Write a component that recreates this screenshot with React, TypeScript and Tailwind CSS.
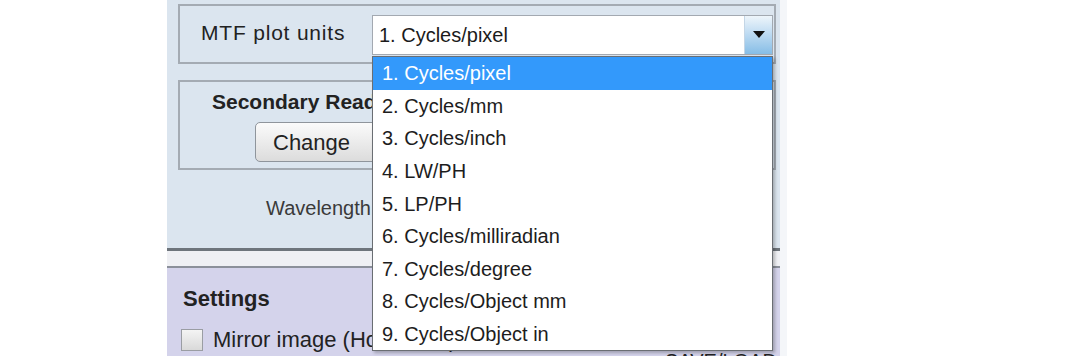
import React from "react";

const units = [
  "1. Cycles/pixel",
  "2. Cycles/mm",
  "3. Cycles/inch",
  "4. LW/PH",
  "5. LP/PH",
  "6. Cycles/milliradian",
  "7. Cycles/degree",
  "8. Cycles/Object mm",
  "9. Cycles/Object in",
];

function UnitSelect() {
  return (
    <div className="relative w-[401px] h-[40px] shrink-0">
      <div className="flex h-full border border-[#a3a9b1] bg-white">
        <div className="flex-1 flex items-center pl-[6px] text-[20px] text-[#1b1b1b]">
          {units[0]}
        </div>
        <div className="w-[28px] h-full flex items-center justify-center bg-gradient-to-b from-[#eef5fb] to-[#86bde6] border-l border-[#c4d6e6]">
          <svg width="12" height="8" viewBox="0 0 12 8">
            <path d="M0 0 L12 0 L6 7 Z" fill="#111" />
          </svg>
        </div>
      </div>

      {/* open list, drawn over the panel below */}
      <div className="absolute left-0 top-[41px] w-[401px] bg-white border border-[#6a6e73] shadow-[2px_2px_3px_rgba(0,0,0,0.25)] z-10">
        {units.map((u, i) => (
          <div
            key={u}
            className={`h-[32.6px] flex items-center pl-[9px] text-[20px] ${
              i === 0 ? "bg-[#3399fb] text-white" : "text-[#1d1d1d]"
            }`}
          >
            {u}
          </div>
        ))}
      </div>
    </div>
  );
}

export default function App() {
  return (
    <div
      className="w-[1068px] h-[356px] overflow-hidden bg-white flex"
      style={{ fontFamily: '"Liberation Sans", Arial, sans-serif' }}
    >
      <div className="w-[167px] shrink-0" />

      <div className="w-[613px] shrink-0 flex flex-col">
        <div className="h-[248px] shrink-0 bg-[#dbe5ef] pl-[11px] pt-[4px] flex flex-col">
          <div className="w-[598px] h-[60px] border-2 border-[#a4abb3] flex items-start pt-[9px] pl-[21px]">
            <div className="w-[171px] h-[36px] flex items-center text-[21px] tracking-[0.8px] text-[#222]">
              MTF plot units
            </div>
            <UnitSelect />
          </div>

          <div className="mt-[16px] w-[598px] h-[90px] border-2 border-[#a4abb3] pl-[32px] pt-[8px] flex flex-col">
            <div className="whitespace-nowrap text-[21px] leading-[24px] font-bold text-[#222]">
              Secondary Readout
            </div>
            <button className="ml-[43px] mt-[8px] w-[150px] h-[40px] rounded-[5px] border border-[#8f959c] bg-gradient-to-b from-[#fbfbfb] to-[#dcdcdc] text-[22px] text-[#222] text-left pl-[17px]">
              Change
            </button>
          </div>

          <div className="mt-[27px] ml-[88px] whitespace-nowrap text-[20px] leading-[22px] text-[#3a3a3a]">
            Wavelength (nm)
          </div>
        </div>

        <div className="h-[3px] shrink-0 bg-[#6e757c]" />
        <div className="h-[15px] shrink-0 bg-[#eff0f4]" />
        <div className="h-[2px] shrink-0 bg-[#8b909a]" />

        <div className="flex-1 bg-[#d4d3eb] pl-[16px] pt-[17px] flex flex-col">
          <div className="text-[22px] leading-[28px] font-bold text-[#222]">
            Settings
          </div>
          <div className="mt-[15px] flex items-center">
            <div className="w-[22px] h-[22px] border border-[#9a9da3] bg-gradient-to-b from-[#f4f4f4] to-[#d9d9d9] -ml-[2px]" />
            <div className="ml-[10px] whitespace-nowrap text-[22px] leading-[24px] text-[#222]">
              Mirror image (Horizontal)
            </div>
          </div>
          <div className="ml-[482px] -mt-[2px] text-[20px] leading-[22px] text-[#222]">
            SAVE/LOAD
          </div>
        </div>
      </div>

      <div className="w-[7px] shrink-0 bg-[#f4f6f9]" />
      <div className="flex-1" />
    </div>
  );
}
